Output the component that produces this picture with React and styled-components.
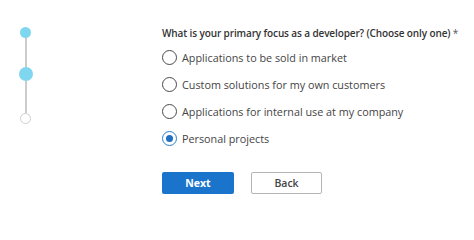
import React, { useState } from "react";
import styled, { createGlobalStyle } from "styled-components";

const GlobalStyle = createGlobalStyle`
  html, body {
    margin: 0;
    padding: 0;
    background: #ffffff;
  }
  body {
    font-family: "Open Sans", "Noto Sans", sans-serif;
  }
`;

const options = [
  "Applications to be sold in market",
  "Custom solutions for my own customers",
  "Applications for internal use at my company",
  "Personal projects",
];

export default function App() {
  const [selected, setSelected] = useState(3);

  return (
    <Page>
      <GlobalStyle />
      <Stepper>
        <Dot size={11} />
        <Line height={29} />
        <Dot size={14} />
        <Line height={32} />
        <Dot size={11} hollow />
      </Stepper>
      <Form>
        <Question>
          What is your primary focus as a developer? (Choose only one) <Star>*</Star>
        </Question>
        <Options>
          {options.map((label, i) => (
            <Option key={label} onClick={() => setSelected(i)}>
              <Radio checked={selected === i} />
              <OptionText>{label}</OptionText>
            </Option>
          ))}
        </Options>
        <Buttons>
          <PrimaryButton>Next</PrimaryButton>
          <SecondaryButton>Back</SecondaryButton>
        </Buttons>
      </Form>
    </Page>
  );
}

const Page = styled.div`
  display: flex;
  width: 474px;
  height: 225px;
  overflow: hidden;
`;

const Stepper = styled.div`
  width: 51px;
  flex-shrink: 0;
  display: flex;
  flex-direction: column;
  align-items: center;
  padding-top: 27px;
  box-sizing: border-box;
`;

const Dot = styled.div`
  width: ${(p) => p.size}px;
  height: ${(p) => p.size}px;
  border-radius: 50%;
  box-sizing: border-box;
  flex-shrink: 0;
  background: ${(p) => (p.hollow ? "#ffffff" : "#7fd6ef")};
  border: ${(p) => (p.hollow ? "1.5px solid #cfcfcf" : "none")};
`;

const Line = styled.div`
  width: 2px;
  height: ${(p) => p.height}px;
  background: #cccccc;
`;

const Form = styled.div`
  margin-left: 111px;
  padding-top: 26px;
  display: flex;
  flex-direction: column;
`;

const Question = styled.div`
  font-size: 10px;
  line-height: 14px;
  font-weight: 600;
  letter-spacing: -0.12px;
  color: #333333;
  white-space: nowrap;
`;

const Star = styled.span`
  font-weight: 400;
  color: #555555;
`;

const Options = styled.div`
  margin-top: 4px;
  display: flex;
  flex-direction: column;
`;

const Option = styled.label`
  display: flex;
  align-items: center;
  height: 27px;
  cursor: pointer;
`;

const Radio = styled.span`
  width: 15px;
  height: 15px;
  border-radius: 50%;
  box-sizing: border-box;
  border: 1.5px solid ${(p) => (p.checked ? "#2b7fd1" : "#4a4a4a")};
  position: relative;
  flex-shrink: 0;
  &::after {
    content: "";
    display: ${(p) => (p.checked ? "block" : "none")};
    position: absolute;
    left: 2.5px;
    top: 2.5px;
    width: 7px;
    height: 7px;
    border-radius: 50%;
    background: #1f6fc2;
  }
`;

const OptionText = styled.span`
  margin-left: 5px;
  font-size: 10.8px;
  color: #444444;
  white-space: nowrap;
`;

const Buttons = styled.div`
  margin-top: 20px;
  display: flex;
  gap: 17px;
`;

const PrimaryButton = styled.button`
  width: 72px;
  height: 22px;
  border: none;
  border-radius: 2px;
  background: #1b74cc;
  color: #ffffff;
  font-family: "Open Sans", sans-serif;
  font-size: 10.5px;
  font-weight: 700;
  padding: 0;
`;

const SecondaryButton = styled.button`
  width: 71px;
  height: 22px;
  border: 1px solid #b5b5b5;
  border-radius: 2px;
  background: #ffffff;
  color: #444444;
  font-family: "Open Sans", sans-serif;
  font-size: 10.5px;
  font-weight: 600;
  padding: 0;
`;
